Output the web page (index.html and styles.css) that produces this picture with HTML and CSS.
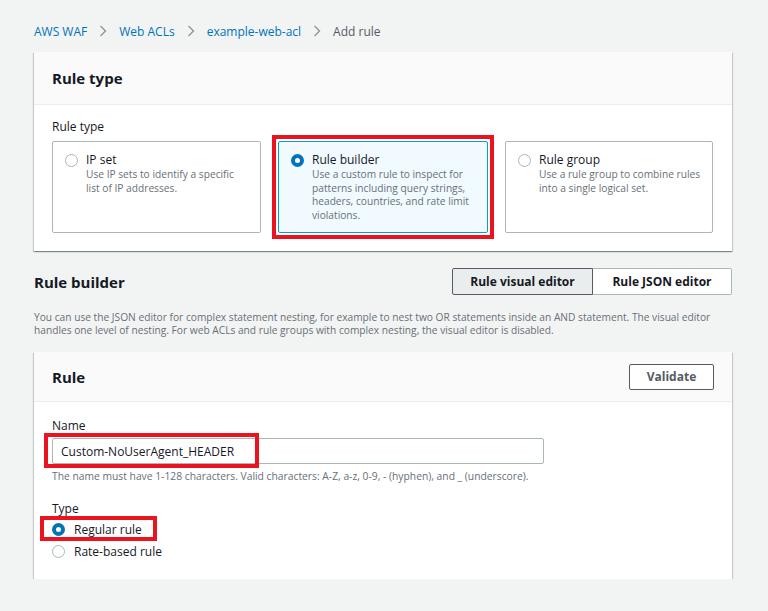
FILE: index.html
```html
<!DOCTYPE html>
<html lang="en">
<head>
    <meta charset="UTF-8">
    <meta name="viewport" content="width=device-width, initial-scale=1.0">
    <title>Add rule</title>
    <link rel="stylesheet" href="styles.css">
</head>
<body>
    <div class="page">
        <nav class="crumbs">
            <a href="#">AWS WAF</a>
            <span class="chev"><svg width="8" height="12" viewBox="0 0 8 12"><path d="M1.5 1l5 5-5 5" fill="none" stroke="#879596" stroke-width="1.3"/></svg></span>
            <a href="#">Web ACLs</a>
            <span class="chev"><svg width="8" height="12" viewBox="0 0 8 12"><path d="M1.5 1l5 5-5 5" fill="none" stroke="#879596" stroke-width="1.3"/></svg></span>
            <a href="#">example-web-acl</a>
            <span class="chev"><svg width="8" height="12" viewBox="0 0 8 12"><path d="M1.5 1l5 5-5 5" fill="none" stroke="#879596" stroke-width="1.3"/></svg></span>
            <span class="current">Add rule</span>
        </nav>

        <section class="card">
            <div class="card-head">
                <h2>Rule type</h2>
            </div>
            <div class="card-body type-body">
                <div class="label">Rule type</div>
                <div class="tiles">
                    <div class="tile">
                        <span class="radio"></span>
                        <div>
                            <div class="tile-title">IP set</div>
                            <div class="tile-desc">Use IP sets to identify a specific list of IP addresses.</div>
                        </div>
                    </div>
                    <div class="tile selected">
                        <span class="radio on"></span>
                        <div>
                            <div class="tile-title">Rule builder</div>
                            <div class="tile-desc">Use a custom rule to inspect for patterns including query strings, headers, countries, and rate limit violations.</div>
                        </div>
                        <span class="mark tile-mark"></span>
                    </div>
                    <div class="tile">
                        <span class="radio"></span>
                        <div>
                            <div class="tile-title">Rule group</div>
                            <div class="tile-desc">Use a rule group to combine rules into a single logical set.</div>
                        </div>
                    </div>
                </div>
            </div>
        </section>

        <div class="builder-head">
            <h2>Rule builder</h2>
            <div class="segmented">
                <button class="seg active">Rule visual editor</button>
                <button class="seg">Rule JSON editor</button>
            </div>
        </div>
        <p class="builder-desc">You can use the JSON editor for complex statement nesting, for example to nest two OR statements inside an AND statement. The visual editor handles one level of nesting. For web ACLs and rule groups with complex nesting, the visual editor is disabled.</p>

        <section class="card">
            <div class="card-head rule-head">
                <h2>Rule</h2>
                <button class="btn">Validate</button>
            </div>
            <div class="card-body rule-body">
                <div class="label name-label">Name</div>
                <div class="input-wrap">
                    <input class="input" type="text" value="Custom-NoUserAgent_HEADER">
                    <span class="mark name-mark"></span>
                </div>
                <div class="hint">The name must have 1-128 characters. Valid characters: A-Z, a-z, 0-9, - (hyphen), and _ (underscore).</div>

                <div class="label type-label">Type</div>
                <div class="option">
                    <span class="radio on"></span>Regular rule
                    <span class="mark type-mark"></span>
                </div>
                <div class="option">
                    <span class="radio"></span>Rate-based rule
                </div>
            </div>
        </section>
    </div>
</body>
</html>
```

FILE: styles.css
```css
:root {
    --bg-color: #f2f3f3;
    --text-color: #16191f;
    --muted-color: #687078;
    --link-color: #0073bb;
    --border-color: #aab7b8;
    --head-bg: #fafafa;
    --mark-color: #e9141f;
}

body {
    margin: 0;
    background: var(--bg-color);
    color: var(--text-color);
    font-family: "Open Sans", Arial, sans-serif;
}

.page {
    width: 698px;
    padding: 20px 0 0 34px;
}

.crumbs {
    display: flex;
    align-items: center;
    height: 22px;
    font-size: 12px;
}

.crumbs a {
    color: var(--link-color);
    text-decoration: none;
}

.crumbs .chev {
    display: flex;
    margin: 0 12px;
}

.crumbs .current {
    color: #545b64;
}

.card {
    background: #fff;
    box-shadow: 0 1px 1px 0 rgba(0, 28, 36, 0.3), 1px 1px 1px 0 rgba(0, 28, 36, 0.15), -1px 1px 1px 0 rgba(0, 28, 36, 0.15);
}

.crumbs + .card {
    margin-top: 10px;
}

.card-head {
    display: flex;
    align-items: center;
    justify-content: space-between;
    height: 52px;
    padding: 0 18px;
    background: var(--head-bg);
    border-bottom: 1px solid #eaeded;
}

h2 {
    margin: 0;
    font-size: 15px;
    font-weight: 700;
}

.card-body {
    padding: 14px 18px 18px;
}

.label {
    font-size: 12px;
    line-height: 16px;
    margin-bottom: 6px;
}

.tiles {
    display: grid;
    grid-template-columns: 209px 210px 208px;
    gap: 17px;
}

.tile {
    position: relative;
    display: flex;
    gap: 8px;
    height: 92px;
    box-sizing: border-box;
    padding: 10px 5px 10px 12px;
    border: 1px solid var(--border-color);
    border-radius: 2px;
}

.tile.selected {
    background: #f1faff;
    border-color: #00a1c9;
}

.tile-title {
    font-size: 12px;
    line-height: 16px;
}

.tile-desc {
    max-width: 163px;
    font-size: 10.2px;
    line-height: 13.5px;
    color: var(--muted-color);
}

.radio {
    flex: none;
    display: inline-block;
    box-sizing: border-box;
    width: 13px;
    height: 13px;
    margin-top: 2px;
    border: 1px solid var(--border-color);
    border-radius: 50%;
    background: #fff;
}

.radio.on {
    border: 4px solid var(--link-color);
}

.builder-head {
    display: flex;
    align-items: center;
    justify-content: space-between;
    margin-top: 17px;
}

.segmented {
    display: flex;
}

.seg {
    height: 27px;
    width: 141px;
    padding: 0;
    border: 1px solid #545b64;
    background: #fff;
    color: var(--text-color);
    font-family: inherit;
    font-size: 12px;
    font-weight: 700;
}

.seg.active {
    background: #eaeded;
    border-radius: 2px 0 0 2px;
}

.seg + .seg {
    width: 139px;
    border-left: none;
    border-color: #aab7b8;
    border-radius: 0 2px 2px 0;
}

.builder-desc {
    margin: 16px 0 15px;
    font-size: 10.2px;
    line-height: 13px;
    color: var(--muted-color);
}

.rule-head {
    height: 49px;
}

.btn {
    height: 26px;
    width: 85px;
    border: 1px solid #545b64;
    border-radius: 2px;
    background: #fff;
    color: #545b64;
    font-family: inherit;
    font-size: 12px;
    font-weight: 700;
}

.rule-body {
    padding-top: 16px;
    padding-bottom: 17px;
}

.name-label {
    margin-bottom: 4px;
}

.input-wrap {
    position: relative;
    width: 492px;
}

.input {
    display: block;
    box-sizing: border-box;
    width: 100%;
    height: 26px;
    padding: 0 8px;
    border: 1px solid var(--border-color);
    border-radius: 2px;
    font-family: inherit;
    font-size: 12px;
    color: var(--text-color);
}

.mark {
    position: absolute;
    box-sizing: border-box;
    border: 4px solid var(--mark-color);
    pointer-events: none;
}

.tile-mark {
    left: -7px;
    top: -7px;
    right: -7px;
    bottom: -7px;
}

.name-mark {
    left: -8px;
    top: -5px;
    width: 215px;
    height: 35px;
}

.hint {
    margin-top: 6px;
    font-size: 10.3px;
    line-height: 12px;
    color: var(--muted-color);
}

.type-label {
    margin-top: 19px;
    margin-bottom: 1px;
}

.option {
    position: relative;
    display: flex;
    align-items: center;
    gap: 9px;
    height: 22px;
    font-size: 12px;
}

.option .radio {
    margin-top: 0;
}

.type-mark {
    left: -12px;
    top: -2px;
    width: 117px;
    height: 25px;
}
```
